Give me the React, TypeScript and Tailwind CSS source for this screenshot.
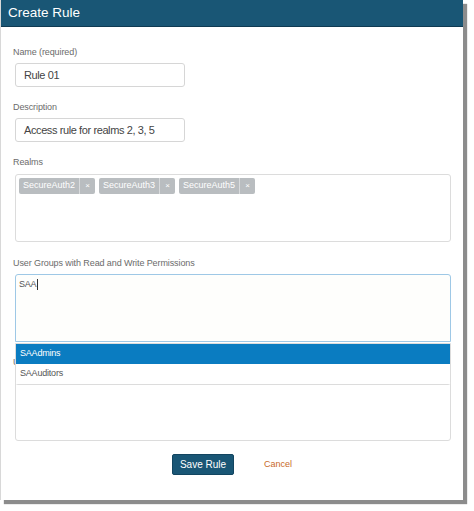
const realms = ["SecureAuth2", "SecureAuth3", "SecureAuth5"];

const Label = ({ children }: { children: React.ReactNode }) => (
  <div className="text-[9px] leading-[13px] tracking-[-0.1px] text-[#6b6b6b] whitespace-nowrap">{children}</div>
);

export default function App() {
  return (
    <div className="min-h-screen bg-white font-['Liberation_Sans',Arial,sans-serif]">
      <div className="relative w-[463px] h-[500px] bg-white border-l border-[#d8d8d8] shadow-[4px_4px_1px_rgba(0,0,0,0.45)]">
        {/* header */}
        <div className="h-[27px] bg-[#195675] border-b border-[#0f3a52] flex items-center px-[7px]">
          <span className="text-white text-[13.5px] leading-none">Create Rule</span>
        </div>

        <div className="flex flex-col px-[12px] pt-[19px]">
          <Label>Name (required)</Label>
          <div className="ml-[2px] mt-[4px] w-[170px] h-[24px] border border-[#d6d6d6] rounded-[3px] flex items-center px-[8px] text-[11px] tracking-[-0.4px] text-[#444] whitespace-nowrap">
            Rule 01
          </div>

          <div className="mt-[14px]">
            <Label>Description</Label>
          </div>
          <div className="ml-[2px] mt-[4px] w-[170px] h-[24px] border border-[#d6d6d6] rounded-[3px] flex items-center px-[8px] text-[11px] tracking-[-0.4px] text-[#444] whitespace-nowrap">
            Access rule for realms 2, 3, 5
          </div>

          <div className="mt-[14px]">
            <Label>Realms</Label>
          </div>
          <div className="ml-[2px] mt-[5px] w-[436px] h-[68px] border border-[#dcdcdc] rounded-[3px] p-[3px] flex items-start gap-[4px]">
            {realms.map((r) => (
              <div key={r} className="flex h-[16px] bg-[#b9bdc0] text-white text-[9px] rounded-[2px]">
                <span className="px-[4px] flex items-center">{r}</span>
                <span className="w-[16px] border-l border-[#d9dbdd] flex items-center justify-center text-[8px]">×</span>
              </div>
            ))}
          </div>

          <div className="mt-[15px]">
            <Label>User Groups with Read and Write Permissions</Label>
          </div>
          <div className="relative ml-[2px] mt-[4px] w-[436px] h-[68px] border border-[#9ec8e6] rounded-t-[3px] bg-[#fefefc] px-[3px] pt-[3px]">
            <div className="flex items-center text-[9px] tracking-[-0.3px] text-[#555]">
              SAA<span className="inline-block w-px h-[11px] bg-[#333] ml-px" />
            </div>
          </div>

          <div className="mt-[14px]">
            <Label>Users with Read Permissions</Label>
          </div>
          <div className="ml-[2px] mt-[4px] w-[436px] h-[68px] border border-[#dcdcdc] rounded-[3px]" />

          <div className="mt-[13px] flex justify-center gap-[30px] items-center">
            <button className="w-[62px] h-[21px] bg-[#195675] text-white text-[10px] rounded-[2px] border border-[#124560]">
              Save Rule
            </button>
            <span className="text-[9px] text-[#c8692a]">Cancel</span>
          </div>
        </div>

        {/* autocomplete dropdown */}
        <div className="absolute left-[14px] top-[343px] w-[436px] bg-white border border-[#dcdcdc] rounded-b-[3px]">
          <div className="h-[20px] bg-[#0a7cc1] flex items-center px-[4px] text-[9px] tracking-[-0.2px] text-white">SAAdmins</div>
          <div className="h-[20px] bg-white flex items-center px-[4px] text-[9px] tracking-[-0.2px] text-[#555]">SAAuditors</div>
        </div>
      </div>
    </div>
  );
}
